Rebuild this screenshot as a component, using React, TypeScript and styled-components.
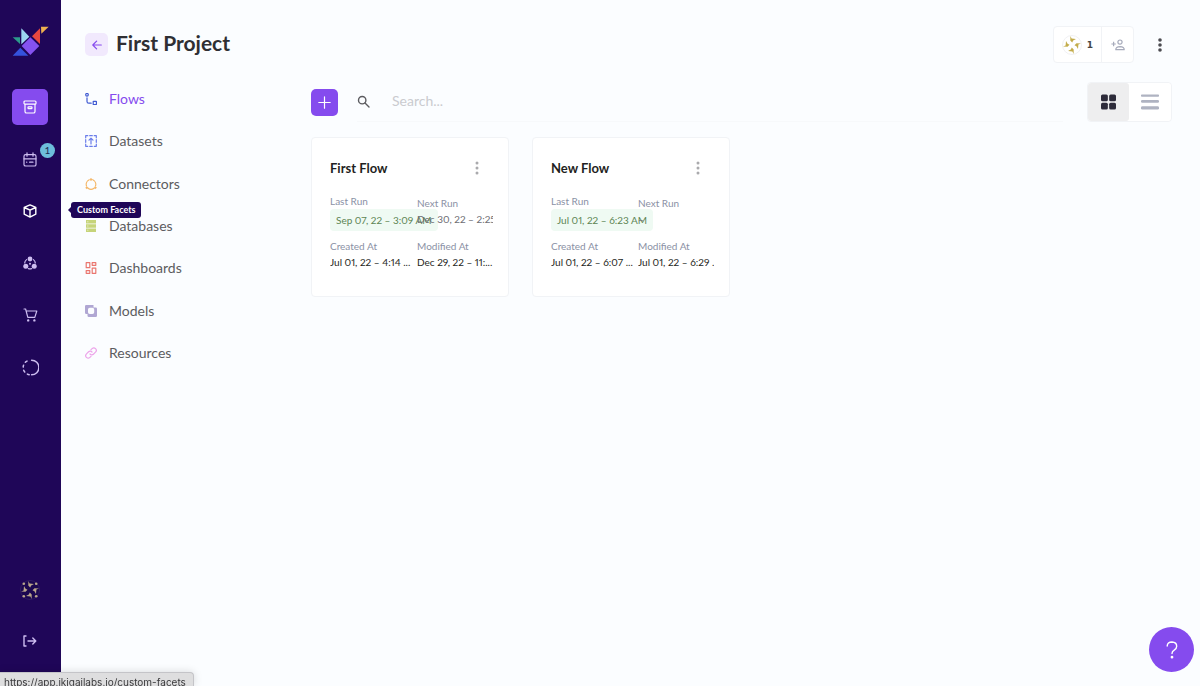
import React from "react";
import styled, { createGlobalStyle } from "styled-components";

const color = {
  navy: "#1f0658",
  purple: "#854bee",
  page: "#fbfdff",
  border: "#f1f3f6",
  text: "#2f2f33",
  muted: "#8b91a5",
  sideIcon: "#cdbdf0",
};

const GlobalStyle = createGlobalStyle`
  * { box-sizing: border-box; }
  html, body { margin: 0; }
  body {
    background: ${color.page};
    color: ${color.text};
    font-family: Lato, "Open Sans", sans-serif;
  }
  button, input { font: inherit; color: inherit; }
  ul { list-style: none; margin: 0; padding: 0; }
  svg { display: block; }
`;

const Shell = styled.div`
  display: flex;
  min-height: 100vh;
`;

const Sidebar = styled.aside`
  display: flex;
  flex-direction: column;
  align-items: center;
  flex: none;
  width: 61px;
  padding: 26px 1px 27px 0;
  background: ${color.navy};
`;

const Logo = styled.a`
  display: block;
  margin-bottom: 33px;
`;

const SideList = styled.ul`
  display: flex;
  flex-direction: column;
  gap: ${(p: { $gap: number }) => p.$gap}px;
`;

const SideFooter = styled.div`
  margin-top: auto;
`;

const SideItem = styled.li`
  position: relative;
`;

const SideButton = styled.button<{ $active?: boolean; $bright?: boolean }>`
  display: grid;
  place-items: center;
  width: 36px;
  height: 36px;
  padding: 0;
  border: 0;
  border-radius: 5px;
  cursor: pointer;
  color: ${(p) => (p.$active || p.$bright ? "#ffffff" : color.sideIcon)};
  background: ${(p) => (p.$active ? color.purple : "transparent")};
`;

const Badge = styled.span`
  position: absolute;
  top: 2px;
  right: -7px;
  width: 15px;
  height: 15px;
  border-radius: 50%;
  background: #6dbddb;
  color: #1c2c55;
  font-size: 10px;
  line-height: 15px;
  text-align: center;
`;

const Tooltip = styled.span`
  position: absolute;
  top: 9px;
  left: 59px;
  z-index: 2;
  padding: 0 5px 0 6px;
  border-radius: 3px;
  background: ${color.navy};
  color: #fff;
  font-size: 9px;
  font-weight: 700;
  line-height: 16px;
  white-space: nowrap;

  &::before {
    content: "";
    position: absolute;
    top: 5px;
    left: -3px;
    border: 3px solid transparent;
    border-left: 0;
    border-right-color: ${color.navy};
  }
`;

const Main = styled.main`
  flex: 1;
  min-width: 0;
  padding: 26px 28px 26px 24px;
`;

const Header = styled.header`
  display: flex;
  align-items: center;
  margin-bottom: 19px;
`;

const BackButton = styled.button`
  display: grid;
  place-items: center;
  width: 23px;
  height: 23px;
  margin-right: 8px;
  padding: 0;
  border: 0;
  border-radius: 5px;
  background: #f1e9fd;
  color: ${color.purple};
`;

const Title = styled.h1`
  margin: 0;
  padding-bottom: 3px;
  font-size: 21px;
  font-weight: 700;
  line-height: 24px;
`;

const ShareGroup = styled.div`
  display: flex;
  height: 37px;
  margin-left: auto;
  border: 1px solid ${color.border};
  border-radius: 4px;
  background: #fff;
`;

const ShareButton = styled.button`
  display: flex;
  align-items: center;
  justify-content: center;
  gap: 5px;
  width: ${(p: { $width: number }) => p.$width}px;
  padding: 0;
  border: 0;
  background: none;
  color: #a7abbb;

  & + & {
    border-left: 1px solid ${color.border};
  }
`;

const Count = styled.span`
  color: #444;
  font-family: "DejaVu Sans", sans-serif;
  font-size: 9px;
  font-weight: 700;
`;

const IconButton = styled.button`
  display: grid;
  place-items: center;
  width: 24px;
  height: 24px;
  margin-left: ${(p: { $space?: number }) => p.$space ?? 0}px;
  padding: 0;
  border: 0;
  background: none;
`;

const Body = styled.div`
  display: flex;
  align-items: flex-start;
`;

const SectionNav = styled.nav`
  flex: none;
  width: 226px;
  padding-top: 8px;
`;

const SectionList = styled.ul`
  display: flex;
  flex-direction: column;
  justify-content: space-between;
  height: 272px;
`;

const SectionLink = styled.a<{ $active?: boolean }>`
  display: flex;
  align-items: center;
  gap: 12px;
  color: ${(p) => (p.$active ? color.purple : "#5c5c60")};
  font-size: 14px;
  line-height: 18px;
  text-decoration: none;
`;

const Content = styled.section`
  flex: 1;
  min-width: 0;
`;

const Toolbar = styled.div`
  display: flex;
  align-items: center;
  margin-bottom: 15px;
`;

const AddButton = styled.button`
  display: grid;
  place-items: center;
  flex: none;
  width: 27px;
  height: 27px;
  padding: 0;
  border: 0;
  border-radius: 5px;
  background: ${color.purple};
  color: #fff;
`;

const SearchBox = styled.label`
  display: flex;
  flex: 1;
  align-items: center;
  gap: 22px;
  height: 40px;
  margin: 0 24px 0 19px;
  border-bottom: 1px solid #f7f9fb;
  color: #5b5b5f;
`;

const SearchInput = styled.input`
  flex: 1;
  min-width: 0;
  padding: 0 0 2px;
  border: 0;
  outline: 0;
  background: none;
  font-size: 14px;
  line-height: 20px;

  &::placeholder {
    color: #cacbcf;
    opacity: 1;
  }
`;

const ViewToggle = styled.div`
  display: flex;
  overflow: hidden;
  border: 1px solid ${color.border};
  border-radius: 4px;
  background: #fff;
`;

const ViewButton = styled.button<{ $active?: boolean }>`
  display: grid;
  place-items: center;
  width: ${(p) => (p.$active ? 41 : 42)}px;
  height: 38px;
  padding: 0;
  border: 0;
  border-radius: 3px;
  background: ${(p) => (p.$active ? "#eeeeef" : "#fff")};
`;

const Cards = styled.div`
  display: flex;
  flex-wrap: wrap;
  gap: 23px;
`;

const Card = styled.article`
  width: 198px;
  padding: 18px 16px 25px 18px;
  border: 1px solid ${color.border};
  border-radius: 4px;
  background: #fff;
`;

const CardHead = styled.div`
  display: flex;
  align-items: center;
  justify-content: space-between;
  margin-bottom: 14px;
  padding-right: 3px;
`;

const CardTitle = styled.h2`
  margin: 0;
  color: #1f1f22;
  font-size: 13px;
  font-weight: 700;
  line-height: 24px;
`;

const Facts = styled.dl`
  display: grid;
  grid-template-columns: 85px 76px;
  column-gap: 2px;
  row-gap: 8px;
  align-items: end;
  margin: 0;
`;

const Fact = styled.div`
  min-width: 0;
`;

const Label = styled.dt`
  color: ${color.muted};
  font-size: 10px;
  line-height: 14px;
`;

const Value = styled.dd<{ $soft?: boolean }>`
  overflow: hidden;
  margin: 0;
  padding: ${(p) => (p.$soft ? "0 0 3px" : "0")};
  color: ${(p) => (p.$soft ? "#6e6e73" : "#1f1f22")};
  font-size: 10px;
  font-variant-numeric: proportional-nums;
  line-height: 18px;
  white-space: nowrap;
`;

const RunTag = styled.dd`
  width: max-content;
  margin: 1px 0 0;
  padding: 0 6px;
  border-radius: 4px;
  background: #effaf3;
  color: #5d8554;
  font-size: 10px;
  font-variant-numeric: proportional-nums;
  line-height: 22px;
`;

const HelpButton = styled.button`
  position: fixed;
  right: 6px;
  bottom: 14px;
  display: grid;
  place-items: center;
  width: 45px;
  height: 45px;
  padding: 0;
  border: 0;
  border-radius: 50%;
  background: ${color.purple};
  color: #fff;
`;

const LinkStatus = styled.div`
  position: fixed;
  bottom: 0;
  left: 0;
  z-index: 3;
  overflow: hidden;
  height: 14px;
  padding: 0 7px 0 4px;
  border: 1px solid #c4c4c8;
  border-width: 1px 1px 0 0;
  border-radius: 0 4px 0 0;
  background: #dededf;
  box-shadow: 0 0 8px rgba(0, 0, 0, 0.15);
  color: #3a3a3c;
  font-family: Inter, sans-serif;
  font-size: 10px;
  line-height: 18px;
`;

const stroke = {
  fill: "none",
  stroke: "currentColor",
  strokeWidth: 1.2,
  strokeLinecap: "round" as const,
  strokeLinejoin: "round" as const,
};

const LogoMark = () => (
  <svg width="37" height="30" viewBox="0 0 111 90">
    <path d="M87 2h23L88 23Z" fill="#eeb04f" />
    <path d="M84 7v47L60 31Z" fill="#e8483f" />
    <path d="M28 7l24 25-24 23Z" fill="#9cd5ef" />
    <path d="M2 34h22v20Z" fill="#2d9a8b" />
    <path d="M55 34l27 26-27 27-26-27Z" fill="#8552f0" />
    <path d="M2 89l23-24 24 24Z" fill="#3552dc" />
  </svg>
);

const Archive = () => (
  <svg width="14" height="14" viewBox="0 0 14 14" {...stroke}>
    <rect x="1" y="1" width="12" height="3.2" rx="1" />
    <path d="M2 4.4v7q0 1.6 1.6 1.6h6.8q1.6 0 1.6-1.6v-7" />
    <rect x="5" y="6.8" width="4" height="1.8" rx=".6" />
  </svg>
);

const Calendar = () => (
  <svg width="14" height="15" viewBox="0 0 14 15" {...stroke}>
    <rect x="1" y="2.6" width="12" height="11.4" rx="1.6" />
    <path d="M1 6.8h12M4 .8v3.4M10 .8v3.4M3.6 10.2h.2M6.6 10.2H10" />
  </svg>
);

const Cube = () => (
  <svg width="14" height="14" viewBox="0 0 14 14" {...stroke} strokeWidth={1.4}>
    <path d="M7 .9l5.8 2.5v6.8L7 13.1l-5.8-2.9V3.4ZM1.4 3.5L7 6.2l5.6-2.7M7 6.2V13" />
  </svg>
);

const Cluster = () => (
  <svg width="14" height="14" viewBox="0 0 14 14" {...stroke}>
    <g fill="currentColor" stroke="none">
      <circle cx="7" cy="3" r="2.4" />
      <circle cx="2.8" cy="10.3" r="2.5" />
      <circle cx="11.2" cy="10.3" r="2.5" />
      <circle cx="7" cy="7.7" r="1" />
    </g>
    <path d="M3.6 3.6Q1.8 5 1.7 7M10.4 3.6Q12.2 5 12.3 7M5.4 12.6q1.6.6 3.2 0" />
  </svg>
);

const Cart = () => (
  <svg width="15" height="14" viewBox="0 0 15 14" {...stroke}>
    <path d="M1 1h1.6l2.2 8.4h7L13.8 3H3.2" />
    <circle cx="5.2" cy="12.4" r=".6" fill="currentColor" />
    <circle cx="11.4" cy="12.4" r=".6" fill="currentColor" />
  </svg>
);

const DashedCircle = () => (
  <svg width="17" height="17" viewBox="0 0 17 17" {...stroke} strokeWidth={1.5}>
    <path d="M9.6 1.2a7.2 7.2 0 0 1 0 14.6" />
    <path d="M7.2 15.7a7.2 7.2 0 0 1-6-7.2 7.2 7.2 0 0 1 6.2-7.2" strokeDasharray="2 3.2" />
  </svg>
);

const Exit = () => (
  <svg width="14" height="12" viewBox="0 0 14 12" {...stroke} strokeWidth={1.4}>
    <path d="M3 1H1v10h2M5 6h7.6M9.8 3l3 3-3 3" />
  </svg>
);

const Identicon = ({ tone, dots }: { tone: string; dots?: boolean }) => (
  <svg width="20" height="20" viewBox="0 0 20 20">
    <circle cx="10" cy="10" r="9.5" fill={dots ? "#1b0750" : "#fff"} stroke={dots ? "#392669" : "#e9e9ed"} strokeWidth=".7" />
    {[0, 90, 180, 270].map((a) => (
      <g key={a} transform={`rotate(${a} 10 10)`} fill={tone}>
        <path d="M8.4 1l1.2 2.6 4.4.4-2.8 1.6-1 1.9-1.9-2Z" />
        {dots && <circle cx="3.8" cy="3.8" r="1.3" />}
      </g>
    ))}
  </svg>
);

const Dots = ({ tone, r = 1.5 }: { tone: string; r?: number }) => (
  <svg width="4" height="14" viewBox="0 0 4 14" fill={tone}>
    <circle cx="2" cy="2" r={r} />
    <circle cx="2" cy="7" r={r} />
    <circle cx="2" cy="12" r={r} />
  </svg>
);

const ArrowLeft = () => (
  <svg width="10" height="10" viewBox="0 0 10 10" {...stroke}>
    <path d="M9.3 5H.9M4.6 1.2L.8 5l3.8 3.8" />
  </svg>
);

const AddPerson = () => (
  <svg width="14" height="12" viewBox="0 0 14 12" {...stroke} strokeLinecap="butt">
    <circle cx="9" cy="3.1" r="2.1" />
    <path d="M4.8 10.6q-.2-2.8 4.2-3 4.4.2 4.2 3ZM2.6 2.8v4.4M.4 5h4.4" />
  </svg>
);

const SectionIcon = ({ tone, children }: { tone: string; children: React.ReactNode }) => (
  <svg width="12" height="12" viewBox="0 0 12 12" {...stroke} color={tone}>
    {children}
  </svg>
);

const sections = [
  {
    label: "Flows",
    tone: "#3f5ad2",
    icon: (
      <>
        <circle cx="2" cy="1.8" r="1.3" />
        <path d="M2 4.8v3.6Q2 10.2 3.8 10.2h2.4" />
        <rect x="8.2" y="8.3" width="3.2" height="3.2" rx=".3" />
      </>
    ),
  },
  {
    label: "Datasets",
    tone: "#6a7dea",
    icon: (
      <>
        <path d="M.7 2.8V.7h2.1M4.7.7h2.6M9.2.7h2.1v2.1M11.3 4.7v2.6M11.3 9.2v2.1H9.2M7.3 11.3H4.7M2.8 11.3H.7V9.2M.7 7.3V4.7" />
        <path d="M6 9V3.4M4 5.2l2-2 2 2" />
      </>
    ),
  },
  {
    label: "Connectors",
    tone: "#f4b768",
    icon: (
      <>
        <path d="M4.2 1.8A5 5 0 0 0 1.5 8M7.8 1.8A5 5 0 0 1 10.5 8M3.3 10.5a5 5 0 0 0 5.4 0" />
        <g fill="currentColor" strokeWidth=".5">
          <circle cx="6" cy="1.5" r="1" />
          <circle cx="1.8" cy="9.7" r="1" />
          <circle cx="10.2" cy="9.7" r="1" />
        </g>
      </>
    ),
  },
  {
    label: "Databases",
    tone: "#c6d47a",
    icon: (
      <>
        <path d="M1 0h10v3.6H1ZM1 4.2h10v3.6H1ZM1 8.4h10V12H1Z" fill="currentColor" stroke="none" />
        <path d="M2.6 1.8h.4M2.6 6h.4M2.6 10.2h.4" stroke="#eef3ce" strokeWidth=".9" />
      </>
    ),
  },
  {
    label: "Dashboards",
    tone: "#ea7770",
    icon: (
      <path d="M1.2.7h3.6v5H1.2ZM7.2.7h3.6v2.6H7.2ZM1.2 8.6h3.6v2.7H1.2ZM7.2 6.2h3.6v5.1H7.2Z" />
    ),
  },
  {
    label: "Models",
    tone: "#b0a7d3",
    icon: (
      <path
        d="M1.3 0h7.2v2.4h2.2q1.3 0 1.3 1.3v7q0 1.3-1.3 1.3H3.8Q2.5 12 2.5 10.7V9H1.3Q0 9 0 7.7V1.3Q0 0 1.3 0ZM4.8 2.8q-1.8 0-1.8 1.8v2.6Q3 9 4.8 9h2.6q1.8 0 1.8-1.8V4.6Q9.2 2.8 7.4 2.8Z"
        fill="currentColor"
        fillRule="evenodd"
        stroke="none"
      />
    ),
  },
  {
    label: "Resources",
    tone: "#eda5ea",
    icon: (
      <path d="M5 7a2.3 2.3 0 0 0 3.4.2l2.1-2.1a2.4 2.4 0 0 0-3.4-3.5L6 2.7M7 5a2.3 2.3 0 0 0-3.4-.2L1.5 6.9a2.4 2.4 0 0 0 3.4 3.5L6 9.3" />
    ),
  },
];

const flows = [
  {
    name: "First Flow",
    lastRun: "Sep 07, 22 – 3:09 AM",
    nextRun: "Dec 30, 22 – 2:25",
    created: "Jul 01, 22 – 4:14 ...",
    modified: "Dec 29, 22 – 11:...",
  },
  {
    name: "New Flow",
    lastRun: "Jul 01, 22 – 6:23 AM",
    nextRun: "–",
    created: "Jul 01, 22 – 6:07 ...",
    modified: "Jul 01, 22 – 6:29 .",
  },
];

const FlowCard = ({ flow }: { flow: (typeof flows)[number] }) => (
  <Card>
    <CardHead>
      <CardTitle>{flow.name}</CardTitle>
      <IconButton aria-label={`Options for ${flow.name}`}>
        <Dots tone="#aaaaad" />
      </IconButton>
    </CardHead>
    <Facts>
      <Fact>
        <Label>Last Run</Label>
        <RunTag>{flow.lastRun}</RunTag>
      </Fact>
      <Fact>
        <Label>Next Run</Label>
        <Value $soft>{flow.nextRun}</Value>
      </Fact>
      <Fact>
        <Label>Created At</Label>
        <Value>{flow.created}</Value>
      </Fact>
      <Fact>
        <Label>Modified At</Label>
        <Value>{flow.modified}</Value>
      </Fact>
    </Facts>
  </Card>
);

export default function App() {
  return (
    <>
      <GlobalStyle />
      <Shell>
        <Sidebar>
          <Logo href="#" aria-label="Home">
            <LogoMark />
          </Logo>
          <SideList $gap={16}>
            <SideItem>
              <SideButton $active aria-label="Projects"><Archive /></SideButton>
            </SideItem>
            <SideItem>
              <SideButton aria-label="Schedule"><Calendar /></SideButton>
              <Badge>1</Badge>
            </SideItem>
            <SideItem>
              <SideButton $bright aria-label="Custom Facets"><Cube /></SideButton>
              <Tooltip role="tooltip">Custom Facets</Tooltip>
            </SideItem>
            <SideItem>
              <SideButton aria-label="Groups"><Cluster /></SideButton>
            </SideItem>
            <SideItem>
              <SideButton aria-label="Store"><Cart /></SideButton>
            </SideItem>
            <SideItem>
              <SideButton aria-label="Usage"><DashedCircle /></SideButton>
            </SideItem>
          </SideList>
          <SideFooter>
            <SideList $gap={15}>
              <SideItem>
                <SideButton aria-label="Account"><Identicon tone="#b9a68c" dots /></SideButton>
              </SideItem>
              <SideItem>
                <SideButton aria-label="Log out"><Exit /></SideButton>
              </SideItem>
            </SideList>
          </SideFooter>
        </Sidebar>

        <Main>
          <Header>
            <BackButton aria-label="Back"><ArrowLeft /></BackButton>
            <Title>First Project</Title>
            <ShareGroup>
              <ShareButton $width={47} aria-label="Members">
                <Identicon tone="#c3ac4b" />
                <Count>1</Count>
              </ShareButton>
              <ShareButton $width={32} aria-label="Add member"><AddPerson /></ShareButton>
            </ShareGroup>
            <IconButton $space={14} aria-label="Project options">
              <Dots tone="#4b4b50" r={1.8} />
            </IconButton>
          </Header>

          <Body>
            <SectionNav aria-label="Project sections">
              <SectionList>
                {sections.map((s, i) => (
                  <li key={s.label}>
                    <SectionLink href="#" $active={i === 0}>
                      <SectionIcon tone={s.tone}>{s.icon}</SectionIcon>
                      {s.label}
                    </SectionLink>
                  </li>
                ))}
              </SectionList>
            </SectionNav>

            <Content>
              <Toolbar>
                <AddButton aria-label="Add flow">
                  <svg width="13" height="13" viewBox="0 0 13 13" {...stroke}>
                    <path d="M6.5.8v11.4M.8 6.5h11.4" />
                  </svg>
                </AddButton>
                <SearchBox>
                  <svg width="13" height="13" viewBox="0 0 13 13" {...stroke} strokeWidth={1.4}>
                    <circle cx="5.2" cy="5.2" r="3.7" />
                    <path d="M8 8l4 4" />
                  </svg>
                  <SearchInput type="search" placeholder="Search..." aria-label="Search" />
                </SearchBox>
                <ViewToggle>
                  <ViewButton $active aria-label="Grid view">
                    <svg width="15" height="16" viewBox="0 0 16 16" fill="#2d2b3a">
                      <rect width="7.3" height="7.3" rx="1.6" />
                      <rect x="8.7" width="7.3" height="7.3" rx="1.6" />
                      <rect y="8.7" width="7.3" height="7.3" rx="1.6" />
                      <rect x="8.7" y="8.7" width="7.3" height="7.3" rx="1.6" />
                    </svg>
                  </ViewButton>
                  <ViewButton aria-label="List view">
                    <svg width="18" height="16" viewBox="0 0 18 16" fill="#afb3c1">
                      <rect y=".6" width="18" height="2.2" rx=".8" />
                      <rect y="6" width="18" height="2.8" rx="1.2" />
                      <rect y="12.2" width="18" height="3.4" rx="1.4" />
                    </svg>
                  </ViewButton>
                </ViewToggle>
              </Toolbar>
              <Cards>
                {flows.map((f) => (
                  <FlowCard key={f.name} flow={f} />
                ))}
              </Cards>
            </Content>
          </Body>
        </Main>
      </Shell>

      <HelpButton aria-label="Help">
        <svg width="12" height="18" viewBox="0 0 12 18" {...stroke} strokeWidth={1.4}>
          <path d="M1.2 5Q1.4 1 6 1q4.6.2 4.7 4.2 0 2.4-2.5 3.9Q6 10.4 6 12.6" />
          <circle cx="6" cy="16.2" r=".7" fill="currentColor" />
        </svg>
      </HelpButton>
      <LinkStatus role="status">https://app.ikigailabs.io/custom-facets</LinkStatus>
    </>
  );
}
